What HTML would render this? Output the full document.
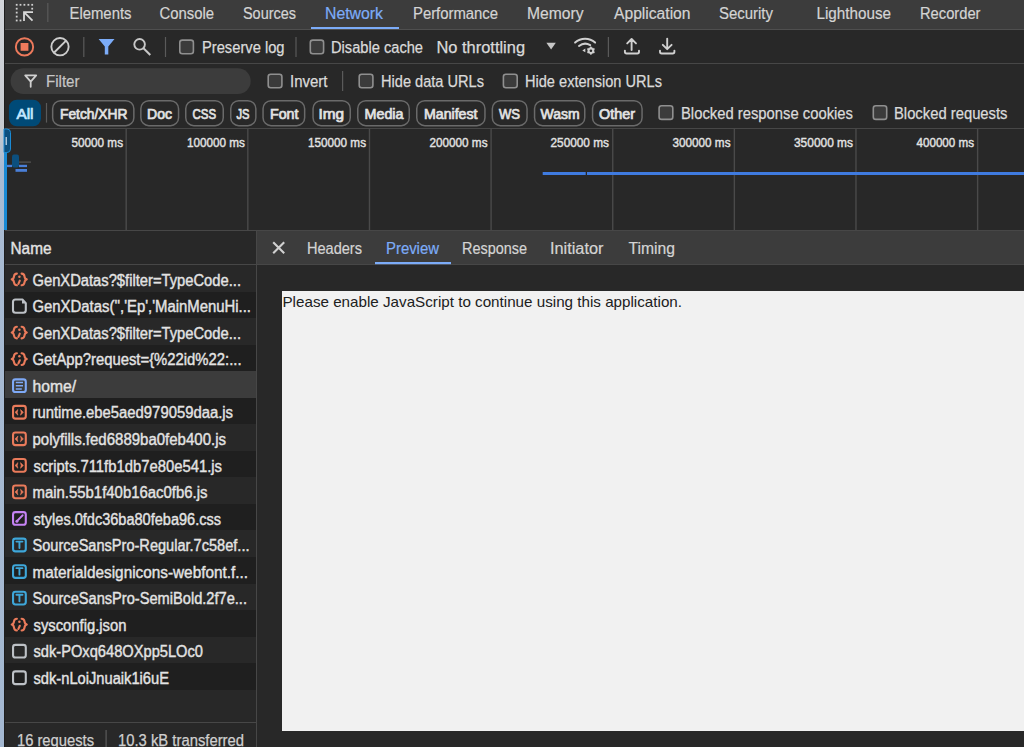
<!DOCTYPE html>
<html><head><meta charset='utf-8'><style>
html,body{margin:0;padding:0;width:1024px;height:747px;overflow:hidden;background:#282828;}
div{position:absolute;}
svg{position:absolute;left:0;top:0;}
</style></head><body>
<div style='left:0px;top:0px;width:4px;height:747px;background:linear-gradient(#d2d5da 0px,#c6cad0 130px,#a9bbd2 165px,#a4b8d1 747px);'></div><div style='left:4px;top:0px;width:1px;height:747px;background:#1e1e1e;'></div><div style='left:5px;top:0px;width:1019px;height:29px;background:#3c3c3c;'></div><div style='left:5px;top:29px;width:1019px;height:1px;background:#4f4f4f;'></div><div style='left:5px;top:30px;width:1019px;height:200px;background:#282828;'></div><div style='left:5px;top:63px;width:1019px;height:1px;background:#474747;'></div><div style='left:5px;top:128px;width:1019px;height:1px;background:#474747;'></div><div style='left:5px;top:230px;width:1019px;height:1px;background:#474747;'></div><div style='left:5px;top:231px;width:251px;height:516px;background:#282828;'></div><div style='left:257px;top:231px;width:767px;height:33px;background:#3c3c3c;'></div><div style='left:5px;top:264px;width:1019px;height:1px;background:#474747;'></div><div style='left:256px;top:231px;width:1px;height:516px;background:#474747;'></div><div style='left:257px;top:265px;width:767px;height:482px;background:#282828;'></div><div style='left:5px;top:265.0px;width:251px;height:26.55000000000001px;background:#282828;'></div><div style='left:5px;top:291.55px;width:251px;height:26.55000000000001px;background:#1f1f1f;'></div><div style='left:5px;top:318.1px;width:251px;height:26.549999999999955px;background:#282828;'></div><div style='left:5px;top:344.65px;width:251px;height:26.55000000000001px;background:#1f1f1f;'></div><div style='left:5px;top:371.2px;width:251px;height:26.55000000000001px;background:#3c3c3c;'></div><div style='left:5px;top:397.75px;width:251px;height:26.55000000000001px;background:#1f1f1f;'></div><div style='left:5px;top:424.3px;width:251px;height:26.55000000000001px;background:#282828;'></div><div style='left:5px;top:450.85px;width:251px;height:26.549999999999955px;background:#1f1f1f;'></div><div style='left:5px;top:477.4px;width:251px;height:26.55000000000001px;background:#282828;'></div><div style='left:5px;top:503.95px;width:251px;height:26.55000000000001px;background:#1f1f1f;'></div><div style='left:5px;top:530.5px;width:251px;height:26.549999999999955px;background:#282828;'></div><div style='left:5px;top:557.05px;width:251px;height:26.550000000000068px;background:#1f1f1f;'></div><div style='left:5px;top:583.6px;width:251px;height:26.549999999999955px;background:#282828;'></div><div style='left:5px;top:610.15px;width:251px;height:26.550000000000068px;background:#1f1f1f;'></div><div style='left:5px;top:636.7px;width:251px;height:26.549999999999955px;background:#282828;'></div><div style='left:5px;top:663.25px;width:251px;height:26.549999999999955px;background:#1f1f1f;'></div><div style='left:5px;top:722px;width:251px;height:1px;background:#474747;'></div><div style='left:282px;top:291px;width:742px;height:440px;background:#f1f1f1;'></div>
<svg width='1024' height='747' viewBox='0 0 1024 747'>
<rect x='311' y='27' width='88' height='2' fill='#7cacf8'/>
<rect x='47.2' y='3' width='1.2' height='19' fill='#5a5a5a'/>
<rect x='15.799999999999999' y='3.9' width='1.8' height='1.8' fill='#d0d0d0'/>
<rect x='19.6' y='3.9' width='1.8' height='1.8' fill='#d0d0d0'/>
<rect x='23.5' y='3.9' width='1.8' height='1.8' fill='#d0d0d0'/>
<rect x='27.5' y='3.9' width='1.8' height='1.8' fill='#d0d0d0'/>
<rect x='31.300000000000004' y='3.9' width='1.8' height='1.8' fill='#d0d0d0'/>
<rect x='15.799999999999999' y='7.799999999999999' width='1.8' height='1.8' fill='#d0d0d0'/>
<rect x='15.799999999999999' y='11.7' width='1.8' height='1.8' fill='#d0d0d0'/>
<rect x='15.799999999999999' y='15.700000000000001' width='1.8' height='1.8' fill='#d0d0d0'/>
<rect x='15.799999999999999' y='19.6' width='1.8' height='1.8' fill='#d0d0d0'/>
<rect x='19.6' y='19.6' width='1.8' height='1.8' fill='#d0d0d0'/>
<rect x='31.300000000000004' y='7.799999999999999' width='1.8' height='1.8' fill='#d0d0d0'/>
<path d='M24 21V12.2H33M24.5 12.7L32.5 20.7' stroke='#d8d8d8' stroke-width='1.8' fill='none'/>
<circle cx='24.5' cy='46.9' r='8.65' stroke='#ee7a5c' stroke-width='1.9' fill='none'/>
<rect x='20.6' y='43' width='7.8' height='7.8' fill='#ee7a5c'/>
<circle cx='60' cy='46.7' r='8.65' stroke='#cdcdcd' stroke-width='1.9' fill='none'/>
<path d='M54.2 52.5L65.8 40.9' stroke='#cdcdcd' stroke-width='1.9'/>
<rect x='83.2' y='37' width='1.2' height='20' fill='#5a5a5a'/>
<rect x='164.9' y='37' width='1.2' height='20' fill='#5a5a5a'/>
<rect x='295.4' y='37' width='1.2' height='20' fill='#5a5a5a'/>
<rect x='607.8' y='37' width='1.2' height='20' fill='#5a5a5a'/>
<path d='M98.6 39H114.5L108.3 46.5V54.5H104.8V46.5Z' fill='#7cacf8'/>
<circle cx='139.6' cy='44.3' r='5.3' stroke='#c7c7c7' stroke-width='1.9' fill='none'/>
<path d='M143.5 48.3L150.3 55' stroke='#c7c7c7' stroke-width='2'/>
<rect x='179.8' y='40.099999999999994' width='13.599999999999989' height='13.700000000000005' rx='2.5' fill='#3b3b3b' stroke='#8f8f8f' stroke-width='1.6'/>
<rect x='310.3' y='40.099999999999994' width='13.299999999999978' height='13.700000000000005' rx='2.5' fill='#3b3b3b' stroke='#8f8f8f' stroke-width='1.6'/>
<path d='M546.4 42.8H555.8L551.1 49.5Z' fill='#c7c7c7'/>
<path d='M575.1 42.6A15.06 15.06 0 0 1 595.1 42.6M579 46A10.06 10.06 0 0 1 590.2 45.1' stroke='#d0d0d0' stroke-width='2' fill='none' stroke-linecap='round'/>
<path d='M585.3 48.6L582.3 50.4L585.3 52.2Z' fill='#d0d0d0'/>
<polygon points='590.90,46.60 592.40,48.10 594.45,48.65 593.90,50.70 594.45,52.75 592.40,53.30 590.90,54.80 589.40,53.30 587.35,52.75 587.90,50.70 587.35,48.65 589.40,48.10' fill='#d0d0d0' stroke='#d0d0d0' stroke-width='0.5' stroke-linejoin='round'/>
<circle cx='590.9' cy='50.7' r='1.3' fill='#282828'/>
<path d='M631.6 50V39.3M627.2 43.4L631.6 39L636 43.4M624.9 50.6V51.8Q624.9 53.5 626.6 53.5H637.3Q639 53.5 639 51.8V50.6' stroke='#d0d0d0' stroke-width='1.9' fill='none' stroke-linecap='round' stroke-linejoin='round'/>
<path d='M667.2 38.6V48.6M662.8 44.8L667.2 49.2L671.6 44.8M660 50.6V51.8Q660 53.5 661.7 53.5H672.7Q674.4 53.5 674.4 51.8V50.6' stroke='#d0d0d0' stroke-width='1.9' fill='none' stroke-linecap='round' stroke-linejoin='round'/>
<rect x='10.6' y='68.3' width='240.1' height='25.6' rx='12.8' fill='#3c3c3c'/>
<path d='M25.2 75.4H36.2L30.7 81.6ZM30.7 81.4V86.8' stroke='#d0d0d0' stroke-width='1.8' fill='none' stroke-linejoin='round' stroke-linecap='round'/>
<rect x='268.2' y='74.2' width='13.700000000000012' height='13.499999999999995' rx='2.5' fill='#3b3b3b' stroke='#8f8f8f' stroke-width='1.6'/>
<rect x='342' y='71' width='1.2' height='20' fill='#5a5a5a'/>
<rect x='359.2' y='74.2' width='13.700000000000012' height='13.499999999999995' rx='2.5' fill='#3b3b3b' stroke='#8f8f8f' stroke-width='1.6'/>
<rect x='503.40000000000003' y='74.2' width='13.799999999999978' height='13.499999999999995' rx='2.5' fill='#3b3b3b' stroke='#8f8f8f' stroke-width='1.6'/>
<rect x='8.9' y='99.7' width='32.1' height='26.6' rx='8' fill='#004a77'/>
<rect x='45.9' y='103' width='1.2' height='19.6' fill='#5a5a5a'/>
<rect x='52.65' y='100.75' width='81.19999999999999' height='24.9' rx='8' fill='none' stroke='#6a6a6a' stroke-width='1.5'/>
<rect x='140.85' y='100.75' width='37.70000000000002' height='24.9' rx='8' fill='none' stroke='#6a6a6a' stroke-width='1.5'/>
<rect x='185.75' y='100.75' width='37.5' height='24.9' rx='8' fill='none' stroke='#6a6a6a' stroke-width='1.5'/>
<rect x='230.75' y='100.75' width='25.100000000000023' height='24.9' rx='8' fill='none' stroke='#6a6a6a' stroke-width='1.5'/>
<rect x='263.05' y='100.75' width='41.599999999999966' height='24.9' rx='8' fill='none' stroke='#6a6a6a' stroke-width='1.5'/>
<rect x='313.05' y='100.75' width='37.19999999999999' height='24.9' rx='8' fill='none' stroke='#6a6a6a' stroke-width='1.5'/>
<rect x='357.75' y='100.75' width='51.5' height='24.9' rx='8' fill='none' stroke='#6a6a6a' stroke-width='1.5'/>
<rect x='416.75' y='100.75' width='68.19999999999999' height='24.9' rx='8' fill='none' stroke='#6a6a6a' stroke-width='1.5'/>
<rect x='492.35' y='100.75' width='34.69999999999993' height='24.9' rx='8' fill='none' stroke='#6a6a6a' stroke-width='1.5'/>
<rect x='534.55' y='100.75' width='50.200000000000045' height='24.9' rx='8' fill='none' stroke='#6a6a6a' stroke-width='1.5'/>
<rect x='592.55' y='100.75' width='49.5' height='24.9' rx='8' fill='none' stroke='#6a6a6a' stroke-width='1.5'/>
<rect x='659.0999999999999' y='105.8' width='13.700000000000069' height='13.600000000000003' rx='2.5' fill='#3b3b3b' stroke='#8f8f8f' stroke-width='1.6'/>
<rect x='873.3' y='105.8' width='13.4' height='13.600000000000003' rx='2.5' fill='#3b3b3b' stroke='#8f8f8f' stroke-width='1.6'/>
<rect x='125.50' y='129' width='1.4' height='101' fill='#4a4a4a'/>
<rect x='247.13' y='129' width='1.4' height='101' fill='#4a4a4a'/>
<rect x='368.76' y='129' width='1.4' height='101' fill='#4a4a4a'/>
<rect x='490.39' y='129' width='1.4' height='101' fill='#4a4a4a'/>
<rect x='612.02' y='129' width='1.4' height='101' fill='#4a4a4a'/>
<rect x='733.65' y='129' width='1.4' height='101' fill='#4a4a4a'/>
<rect x='855.28' y='129' width='1.4' height='101' fill='#4a4a4a'/>
<rect x='976.91' y='129' width='1.4' height='101' fill='#4a4a4a'/>
<rect x='542.7' y='172' width='43' height='3' fill='#3f7be0'/>
<rect x='587' y='172' width='437' height='3' fill='#3f7be0'/>
<rect x='4' y='129' width='3' height='101' fill='#1a8ad4'/>
<path d='M4 129H7A3.5 3.5 0 0 1 10.5 132.5V149A3.5 3.5 0 0 1 7 152.5H4Z' fill='#0c4f7e' stroke='#1a8ad4' stroke-width='1'/>
<rect x='5.6' y='137' width='1.2' height='8' fill='#cfe3f5'/>
<rect x='12' y='154.5' width='7' height='13' rx='2' fill='#0c4f7e'/>
<rect x='19' y='161.5' width='12' height='1.2' fill='#555'/>
<rect x='7' y='164.8' width='5' height='2.3' fill='#4a7fd8'/>
<rect x='19' y='164.8' width='8' height='2.3' fill='#4a7fd8'/>
<rect x='15.5' y='169' width='11.5' height='2.8' fill='#4a7fd8'/>
<path d='M273.2 242.2L284.2 253.2M284.2 242.2L273.2 253.2' stroke='#d0d0d0' stroke-width='2.1'/>
<rect x='375' y='262' width='76' height='2.2' fill='#7cacf8'/>
<g transform='translate(0,265.00)' stroke='#ea7b5b' stroke-width='2.1' fill='none' stroke-linecap='round' stroke-linejoin='round'><path d='M16.9 8.6C14.9 8.7 14.2 9.6 14 11.3C13.8 13.2 13.3 14 11.7 14.35C13.3 14.7 13.8 15.5 14 17.4C14.2 19.1 14.9 20.1 16.9 20.3'/><path d='M21.6 8.6C23.6 8.7 24.3 9.6 24.5 11.3C24.7 13.2 25.2 14 26.8 14.35C25.2 14.7 24.7 15.5 24.5 17.4C24.3 19.1 23.6 20.1 21.6 20.3'/></g>
<circle cx='19.4' cy='276.70' r='1.25' fill='#ea7b5b'/>
<path d='M19.8 280.60L18.4 283.80' stroke='#ea7b5b' stroke-width='2.1' stroke-linecap='round'/>
<path d='M15.5 299.55H22.4L25.8 303.15V310.25Q25.8 312.75 23.3 312.75H15.5Q13 312.75 13 310.25V302.05Q13 299.55 15.5 299.55Z' stroke='#bdc1c6' stroke-width='2.1' fill='none' stroke-linejoin='round'/>
<path d='M22 299.85L25.6 303.55H22Z' fill='#bdc1c6'/>
<g transform='translate(0,318.10)' stroke='#ea7b5b' stroke-width='2.1' fill='none' stroke-linecap='round' stroke-linejoin='round'><path d='M16.9 8.6C14.9 8.7 14.2 9.6 14 11.3C13.8 13.2 13.3 14 11.7 14.35C13.3 14.7 13.8 15.5 14 17.4C14.2 19.1 14.9 20.1 16.9 20.3'/><path d='M21.6 8.6C23.6 8.7 24.3 9.6 24.5 11.3C24.7 13.2 25.2 14 26.8 14.35C25.2 14.7 24.7 15.5 24.5 17.4C24.3 19.1 23.6 20.1 21.6 20.3'/></g>
<circle cx='19.4' cy='329.80' r='1.25' fill='#ea7b5b'/>
<path d='M19.8 333.70L18.4 336.90' stroke='#ea7b5b' stroke-width='2.1' stroke-linecap='round'/>
<g transform='translate(0,344.65)' stroke='#ea7b5b' stroke-width='2.1' fill='none' stroke-linecap='round' stroke-linejoin='round'><path d='M16.9 8.6C14.9 8.7 14.2 9.6 14 11.3C13.8 13.2 13.3 14 11.7 14.35C13.3 14.7 13.8 15.5 14 17.4C14.2 19.1 14.9 20.1 16.9 20.3'/><path d='M21.6 8.6C23.6 8.7 24.3 9.6 24.5 11.3C24.7 13.2 25.2 14 26.8 14.35C25.2 14.7 24.7 15.5 24.5 17.4C24.3 19.1 23.6 20.1 21.6 20.3'/></g>
<circle cx='19.4' cy='356.35' r='1.25' fill='#ea7b5b'/>
<path d='M19.8 360.25L18.4 363.45' stroke='#ea7b5b' stroke-width='2.1' stroke-linecap='round'/>
<rect x='13.05' y='379.35' width='12.75' height='12.7' rx='2.4' stroke='#7ea9f6' stroke-width='2.1' fill='none'/>
<path d='M15.8 382.50H23M15.8 385.75H23M15.8 389.00H21.8' stroke='#7ea9f6' stroke-width='1.5'/>
<rect x='13.05' y='405.90' width='12.75' height='12.7' rx='2.4' stroke='#ea7b5b' stroke-width='2.1' fill='none'/>
<path d='M17.9 409.55L15 412.35L17.9 415.15L17.2 412.35ZM20.5 409.55L23.4 412.35L20.5 415.15L21.2 412.35Z' fill='#ea7b5b' stroke='#ea7b5b' stroke-width='0.6' stroke-linejoin='round'/>
<rect x='13.05' y='432.45' width='12.75' height='12.7' rx='2.4' stroke='#ea7b5b' stroke-width='2.1' fill='none'/>
<path d='M17.9 436.10L15 438.90L17.9 441.70L17.2 438.90ZM20.5 436.10L23.4 438.90L20.5 441.70L21.2 438.90Z' fill='#ea7b5b' stroke='#ea7b5b' stroke-width='0.6' stroke-linejoin='round'/>
<rect x='13.05' y='459.00' width='12.75' height='12.7' rx='2.4' stroke='#ea7b5b' stroke-width='2.1' fill='none'/>
<path d='M17.9 462.65L15 465.45L17.9 468.25L17.2 465.45ZM20.5 462.65L23.4 465.45L20.5 468.25L21.2 465.45Z' fill='#ea7b5b' stroke='#ea7b5b' stroke-width='0.6' stroke-linejoin='round'/>
<rect x='13.05' y='485.55' width='12.75' height='12.7' rx='2.4' stroke='#ea7b5b' stroke-width='2.1' fill='none'/>
<path d='M17.9 489.20L15 492.00L17.9 494.80L17.2 492.00ZM20.5 489.20L23.4 492.00L20.5 494.80L21.2 492.00Z' fill='#ea7b5b' stroke='#ea7b5b' stroke-width='0.6' stroke-linejoin='round'/>
<rect x='13.05' y='512.10' width='12.75' height='12.7' rx='2.4' stroke='#c583f3' stroke-width='2.1' fill='none'/>
<path d='M17.3 520.75L22.7 515.25' stroke='#c583f3' stroke-width='1.8' stroke-linecap='round'/>
<circle cx='16.9' cy='521.15' r='1.5' fill='#c583f3'/>
<rect x='13.05' y='538.65' width='12.75' height='12.7' rx='2.4' stroke='#3ea7da' stroke-width='2.1' fill='none'/>
<path d='M16.4 541.60H22.5M19.45 541.60V548.10' stroke='#3ea7da' stroke-width='1.9' stroke-linecap='round'/>
<rect x='13.05' y='565.20' width='12.75' height='12.7' rx='2.4' stroke='#3ea7da' stroke-width='2.1' fill='none'/>
<path d='M16.4 568.15H22.5M19.45 568.15V574.65' stroke='#3ea7da' stroke-width='1.9' stroke-linecap='round'/>
<rect x='13.05' y='591.75' width='12.75' height='12.7' rx='2.4' stroke='#3ea7da' stroke-width='2.1' fill='none'/>
<path d='M16.4 594.70H22.5M19.45 594.70V601.20' stroke='#3ea7da' stroke-width='1.9' stroke-linecap='round'/>
<g transform='translate(0,610.15)' stroke='#ea7b5b' stroke-width='2.1' fill='none' stroke-linecap='round' stroke-linejoin='round'><path d='M16.9 8.6C14.9 8.7 14.2 9.6 14 11.3C13.8 13.2 13.3 14 11.7 14.35C13.3 14.7 13.8 15.5 14 17.4C14.2 19.1 14.9 20.1 16.9 20.3'/><path d='M21.6 8.6C23.6 8.7 24.3 9.6 24.5 11.3C24.7 13.2 25.2 14 26.8 14.35C25.2 14.7 24.7 15.5 24.5 17.4C24.3 19.1 23.6 20.1 21.6 20.3'/></g>
<circle cx='19.4' cy='621.85' r='1.25' fill='#ea7b5b'/>
<path d='M19.8 625.75L18.4 628.95' stroke='#ea7b5b' stroke-width='2.1' stroke-linecap='round'/>
<rect x='13.05' y='644.85' width='12.75' height='12.7' rx='2.4' stroke='#bdc1c6' stroke-width='2.1' fill='none'/>
<rect x='13.05' y='671.40' width='12.75' height='12.7' rx='2.4' stroke='#bdc1c6' stroke-width='2.1' fill='none'/>
<text x='69.46' y='18.75' font-family='Liberation Sans' font-size='16' font-weight='normal' textLength='62.06' lengthAdjust='spacingAndGlyphs' fill='#d4d4d4' stroke='#d4d4d4' stroke-width='0.2' xml:space='preserve'>Elements</text>
<text x='159.48' y='18.75' font-family='Liberation Sans' font-size='16' font-weight='normal' textLength='54.52' lengthAdjust='spacingAndGlyphs' fill='#d4d4d4' stroke='#d4d4d4' stroke-width='0.2' xml:space='preserve'>Console</text>
<text x='242.98' y='18.75' font-family='Liberation Sans' font-size='16' font-weight='normal' textLength='53.02' lengthAdjust='spacingAndGlyphs' fill='#d4d4d4' stroke='#d4d4d4' stroke-width='0.2' xml:space='preserve'>Sources</text>
<text x='412.98' y='18.75' font-family='Liberation Sans' font-size='16' font-weight='normal' textLength='85.03' lengthAdjust='spacingAndGlyphs' fill='#d4d4d4' stroke='#d4d4d4' stroke-width='0.2' xml:space='preserve'>Performance</text>
<text x='526.99' y='18.75' font-family='Liberation Sans' font-size='16' font-weight='normal' textLength='56.52' lengthAdjust='spacingAndGlyphs' fill='#d4d4d4' stroke='#d4d4d4' stroke-width='0.2' xml:space='preserve'>Memory</text>
<text x='614.00' y='18.75' font-family='Liberation Sans' font-size='16' font-weight='normal' textLength='76.51' lengthAdjust='spacingAndGlyphs' fill='#d4d4d4' stroke='#d4d4d4' stroke-width='0.2' xml:space='preserve'>Application</text>
<text x='718.98' y='18.75' font-family='Liberation Sans' font-size='16' font-weight='normal' textLength='54.03' lengthAdjust='spacingAndGlyphs' fill='#d4d4d4' stroke='#d4d4d4' stroke-width='0.2' xml:space='preserve'>Security</text>
<text x='816.47' y='18.75' font-family='Liberation Sans' font-size='16' font-weight='normal' textLength='74.53' lengthAdjust='spacingAndGlyphs' fill='#d4d4d4' stroke='#d4d4d4' stroke-width='0.2' xml:space='preserve'>Lighthouse</text>
<text x='919.99' y='18.75' font-family='Liberation Sans' font-size='16' font-weight='normal' textLength='60.52' lengthAdjust='spacingAndGlyphs' fill='#d4d4d4' stroke='#d4d4d4' stroke-width='0.2' xml:space='preserve'>Recorder</text>
<text x='324.98' y='18.75' font-family='Liberation Sans' font-size='16' font-weight='normal' textLength='58.02' lengthAdjust='spacingAndGlyphs' fill='#7cacf8' stroke='#7cacf8' stroke-width='0.2' xml:space='preserve'>Network</text>
<text x='201.99' y='52.75' font-family='Liberation Sans' font-size='16' font-weight='normal' textLength='82.52' lengthAdjust='spacingAndGlyphs' fill='#dadada' stroke='#dadada' stroke-width='0.25' xml:space='preserve'>Preserve log</text>
<text x='330.99' y='52.75' font-family='Liberation Sans' font-size='16' font-weight='normal' textLength='92.03' lengthAdjust='spacingAndGlyphs' fill='#dadada' stroke='#dadada' stroke-width='0.25' xml:space='preserve'>Disable cache</text>
<text x='436.46' y='52.75' font-family='Liberation Sans' font-size='16' font-weight='normal' textLength='88.56' lengthAdjust='spacingAndGlyphs' fill='#dadada' stroke='#dadada' stroke-width='0.25' xml:space='preserve'>No throttling</text>
<text x='45.95' y='87.00' font-family='Liberation Sans' font-size='16' font-weight='normal' textLength='33.58' lengthAdjust='spacingAndGlyphs' fill='#c7c7c7' stroke='#c7c7c7' stroke-width='0.2' xml:space='preserve'>Filter</text>
<text x='289.97' y='87.00' font-family='Liberation Sans' font-size='16' font-weight='normal' textLength='37.53' lengthAdjust='spacingAndGlyphs' fill='#dadada' stroke='#dadada' stroke-width='0.25' xml:space='preserve'>Invert</text>
<text x='380.99' y='87.00' font-family='Liberation Sans' font-size='16' font-weight='normal' textLength='103.02' lengthAdjust='spacingAndGlyphs' fill='#dadada' stroke='#dadada' stroke-width='0.25' xml:space='preserve'>Hide data URLs</text>
<text x='524.99' y='87.00' font-family='Liberation Sans' font-size='16' font-weight='normal' textLength='137.01' lengthAdjust='spacingAndGlyphs' fill='#dadada' stroke='#dadada' stroke-width='0.25' xml:space='preserve'>Hide extension URLs</text>
<text x='681.00' y='118.60' font-family='Liberation Sans' font-size='16' font-weight='normal' textLength='172.00' lengthAdjust='spacingAndGlyphs' fill='#dadada' stroke='#dadada' stroke-width='0.25' xml:space='preserve'>Blocked response cookies</text>
<text x='893.99' y='118.60' font-family='Liberation Sans' font-size='16' font-weight='normal' textLength='113.52' lengthAdjust='spacingAndGlyphs' fill='#dadada' stroke='#dadada' stroke-width='0.25' xml:space='preserve'>Blocked requests</text>
<text x='71.50' y='146.70' font-family='Liberation Sans' font-size='12.8' font-weight='normal' textLength='51.51' lengthAdjust='spacingAndGlyphs' fill='#e3e3e3' stroke='#e3e3e3' stroke-width='0.4' xml:space='preserve'>50000 ms</text>
<text x='186.99' y='146.70' font-family='Liberation Sans' font-size='12.8' font-weight='normal' textLength='58.01' lengthAdjust='spacingAndGlyphs' fill='#e3e3e3' stroke='#e3e3e3' stroke-width='0.4' xml:space='preserve'>100000 ms</text>
<text x='308.00' y='146.70' font-family='Liberation Sans' font-size='12.8' font-weight='normal' textLength='58.01' lengthAdjust='spacingAndGlyphs' fill='#e3e3e3' stroke='#e3e3e3' stroke-width='0.4' xml:space='preserve'>150000 ms</text>
<text x='429.50' y='146.70' font-family='Liberation Sans' font-size='12.8' font-weight='normal' textLength='58.01' lengthAdjust='spacingAndGlyphs' fill='#e3e3e3' stroke='#e3e3e3' stroke-width='0.4' xml:space='preserve'>200000 ms</text>
<text x='550.49' y='146.70' font-family='Liberation Sans' font-size='12.8' font-weight='normal' textLength='58.51' lengthAdjust='spacingAndGlyphs' fill='#e3e3e3' stroke='#e3e3e3' stroke-width='0.4' xml:space='preserve'>250000 ms</text>
<text x='672.50' y='146.70' font-family='Liberation Sans' font-size='12.8' font-weight='normal' textLength='58.00' lengthAdjust='spacingAndGlyphs' fill='#e3e3e3' stroke='#e3e3e3' stroke-width='0.4' xml:space='preserve'>300000 ms</text>
<text x='793.99' y='146.70' font-family='Liberation Sans' font-size='12.8' font-weight='normal' textLength='59.01' lengthAdjust='spacingAndGlyphs' fill='#e3e3e3' stroke='#e3e3e3' stroke-width='0.4' xml:space='preserve'>350000 ms</text>
<text x='916.49' y='146.70' font-family='Liberation Sans' font-size='12.8' font-weight='normal' textLength='57.52' lengthAdjust='spacingAndGlyphs' fill='#e3e3e3' stroke='#e3e3e3' stroke-width='0.4' xml:space='preserve'>400000 ms</text>
<text x='10.47' y='254.10' font-family='Liberation Sans' font-size='16' font-weight='normal' textLength='41.04' lengthAdjust='spacingAndGlyphs' fill='#e3e3e3' stroke='#e3e3e3' stroke-width='0.4' xml:space='preserve'>Name</text>
<text x='306.98' y='254.10' font-family='Liberation Sans' font-size='16' font-weight='normal' textLength='55.03' lengthAdjust='spacingAndGlyphs' fill='#d4d4d4' stroke='#d4d4d4' stroke-width='0.2' xml:space='preserve'>Headers</text>
<text x='461.98' y='254.10' font-family='Liberation Sans' font-size='16' font-weight='normal' textLength='65.04' lengthAdjust='spacingAndGlyphs' fill='#d4d4d4' stroke='#d4d4d4' stroke-width='0.2' xml:space='preserve'>Response</text>
<text x='549.96' y='254.10' font-family='Liberation Sans' font-size='16' font-weight='normal' textLength='53.54' lengthAdjust='spacingAndGlyphs' fill='#d4d4d4' stroke='#d4d4d4' stroke-width='0.2' xml:space='preserve'>Initiator</text>
<text x='628.48' y='254.10' font-family='Liberation Sans' font-size='16' font-weight='normal' textLength='46.54' lengthAdjust='spacingAndGlyphs' fill='#d4d4d4' stroke='#d4d4d4' stroke-width='0.2' xml:space='preserve'>Timing</text>
<text x='385.98' y='254.10' font-family='Liberation Sans' font-size='16' font-weight='normal' textLength='53.02' lengthAdjust='spacingAndGlyphs' fill='#7cacf8' stroke='#7cacf8' stroke-width='0.2' xml:space='preserve'>Preview</text>
<text x='32.49' y='285.70' font-family='Liberation Sans' font-size='16' font-weight='normal' textLength='208.52' lengthAdjust='spacingAndGlyphs' fill='#e3e3e3' stroke='#e3e3e3' stroke-width='0.4' xml:space='preserve'>GenXDatas?$filter=TypeCode...</text>
<text x='32.49' y='312.25' font-family='Liberation Sans' font-size='16' font-weight='normal' textLength='218.52' lengthAdjust='spacingAndGlyphs' fill='#e3e3e3' stroke='#e3e3e3' stroke-width='0.4' xml:space='preserve'>GenXDatas('','Ep','MainMenuHi...</text>
<text x='32.49' y='338.80' font-family='Liberation Sans' font-size='16' font-weight='normal' textLength='208.52' lengthAdjust='spacingAndGlyphs' fill='#e3e3e3' stroke='#e3e3e3' stroke-width='0.4' xml:space='preserve'>GenXDatas?$filter=TypeCode...</text>
<text x='32.49' y='365.35' font-family='Liberation Sans' font-size='16' font-weight='normal' textLength='209.02' lengthAdjust='spacingAndGlyphs' fill='#e3e3e3' stroke='#e3e3e3' stroke-width='0.4' xml:space='preserve'>GetApp?request={%22id%22:...</text>
<text x='32.48' y='391.90' font-family='Liberation Sans' font-size='16' font-weight='normal' textLength='43.52' lengthAdjust='spacingAndGlyphs' fill='#e3e3e3' stroke='#e3e3e3' stroke-width='0.4' xml:space='preserve'>home/</text>
<text x='32.49' y='418.45' font-family='Liberation Sans' font-size='16' font-weight='normal' textLength='200.51' lengthAdjust='spacingAndGlyphs' fill='#e3e3e3' stroke='#e3e3e3' stroke-width='0.4' xml:space='preserve'>runtime.ebe5aed979059daa.js</text>
<text x='32.49' y='445.00' font-family='Liberation Sans' font-size='16' font-weight='normal' textLength='193.51' lengthAdjust='spacingAndGlyphs' fill='#e3e3e3' stroke='#e3e3e3' stroke-width='0.4' xml:space='preserve'>polyfills.fed6889ba0feb400.js</text>
<text x='33.50' y='471.55' font-family='Liberation Sans' font-size='16' font-weight='normal' textLength='188.50' lengthAdjust='spacingAndGlyphs' fill='#e3e3e3' stroke='#e3e3e3' stroke-width='0.4' xml:space='preserve'>scripts.711fb1db7e80e541.js</text>
<text x='32.49' y='498.10' font-family='Liberation Sans' font-size='16' font-weight='normal' textLength='175.01' lengthAdjust='spacingAndGlyphs' fill='#e3e3e3' stroke='#e3e3e3' stroke-width='0.4' xml:space='preserve'>main.55b1f40b16ac0fb6.js</text>
<text x='33.50' y='524.65' font-family='Liberation Sans' font-size='16' font-weight='normal' textLength='187.51' lengthAdjust='spacingAndGlyphs' fill='#e3e3e3' stroke='#e3e3e3' stroke-width='0.4' xml:space='preserve'>styles.0fdc36ba80feba96.css</text>
<text x='32.49' y='551.20' font-family='Liberation Sans' font-size='16' font-weight='normal' textLength='217.02' lengthAdjust='spacingAndGlyphs' fill='#e3e3e3' stroke='#e3e3e3' stroke-width='0.4' xml:space='preserve'>SourceSansPro-Regular.7c58ef...</text>
<text x='32.49' y='577.75' font-family='Liberation Sans' font-size='16' font-weight='normal' textLength='215.52' lengthAdjust='spacingAndGlyphs' fill='#e3e3e3' stroke='#e3e3e3' stroke-width='0.4' xml:space='preserve'>materialdesignicons-webfont.f...</text>
<text x='32.49' y='604.30' font-family='Liberation Sans' font-size='16' font-weight='normal' textLength='214.52' lengthAdjust='spacingAndGlyphs' fill='#e3e3e3' stroke='#e3e3e3' stroke-width='0.4' xml:space='preserve'>SourceSansPro-SemiBold.2f7e...</text>
<text x='33.49' y='630.85' font-family='Liberation Sans' font-size='16' font-weight='normal' textLength='93.02' lengthAdjust='spacingAndGlyphs' fill='#e3e3e3' stroke='#e3e3e3' stroke-width='0.4' xml:space='preserve'>sysconfig.json</text>
<text x='33.49' y='657.40' font-family='Liberation Sans' font-size='16' font-weight='normal' textLength='169.51' lengthAdjust='spacingAndGlyphs' fill='#e3e3e3' stroke='#e3e3e3' stroke-width='0.4' xml:space='preserve'>sdk-POxq648OXpp5LOc0</text>
<text x='33.49' y='683.95' font-family='Liberation Sans' font-size='16' font-weight='normal' textLength='135.51' lengthAdjust='spacingAndGlyphs' fill='#e3e3e3' stroke='#e3e3e3' stroke-width='0.4' xml:space='preserve'>sdk-nLoiJnuaik1i6uE</text>
<text x='16.98' y='745.60' font-family='Liberation Sans' font-size='16' font-weight='normal' textLength='77.04' lengthAdjust='spacingAndGlyphs' fill='#cfcfcf' stroke='#cfcfcf' stroke-width='0.25' xml:space='preserve'>16 requests</text>
<text x='117.99' y='745.60' font-family='Liberation Sans' font-size='16' font-weight='normal' textLength='126.02' lengthAdjust='spacingAndGlyphs' fill='#cfcfcf' stroke='#cfcfcf' stroke-width='0.25' xml:space='preserve'>10.3 kB transferred</text>
<text x='282.49' y='306.80' font-family='Liberation Sans' font-size='15' font-weight='normal' textLength='399.52' lengthAdjust='spacingAndGlyphs' fill='#202020' stroke='#202020' stroke-width='0' xml:space='preserve'>Please enable JavaScript to continue using this application.</text>
<text x='59.98' y='118.50' font-family='Liberation Sans' font-size='14.3' font-weight='normal' textLength='67.53' lengthAdjust='spacingAndGlyphs' fill='#e3e3e3' stroke='#e3e3e3' stroke-width='0.7' xml:space='preserve'>Fetch/XHR</text>
<text x='147.00' y='118.50' font-family='Liberation Sans' font-size='14.3' font-weight='normal' textLength='25.02' lengthAdjust='spacingAndGlyphs' fill='#e3e3e3' stroke='#e3e3e3' stroke-width='0.7' xml:space='preserve'>Doc</text>
<text x='192.50' y='118.50' font-family='Liberation Sans' font-size='14.3' font-weight='normal' textLength='23.52' lengthAdjust='spacingAndGlyphs' fill='#e3e3e3' stroke='#e3e3e3' stroke-width='0.7' xml:space='preserve'>CSS</text>
<text x='236.50' y='118.50' font-family='Liberation Sans' font-size='14.3' font-weight='normal' textLength='13.00' lengthAdjust='spacingAndGlyphs' fill='#e3e3e3' stroke='#e3e3e3' stroke-width='0.7' xml:space='preserve'>JS</text>
<text x='269.99' y='118.50' font-family='Liberation Sans' font-size='14.3' font-weight='normal' textLength='28.51' lengthAdjust='spacingAndGlyphs' fill='#e3e3e3' stroke='#e3e3e3' stroke-width='0.7' xml:space='preserve'>Font</text>
<text x='318.43' y='118.50' font-family='Liberation Sans' font-size='14.3' font-weight='normal' textLength='25.61' lengthAdjust='spacingAndGlyphs' fill='#e3e3e3' stroke='#e3e3e3' stroke-width='0.7' xml:space='preserve'>Img</text>
<text x='364.50' y='118.50' font-family='Liberation Sans' font-size='14.3' font-weight='normal' textLength='39.00' lengthAdjust='spacingAndGlyphs' fill='#e3e3e3' stroke='#e3e3e3' stroke-width='0.7' xml:space='preserve'>Media</text>
<text x='424.00' y='118.50' font-family='Liberation Sans' font-size='14.3' font-weight='normal' textLength='53.51' lengthAdjust='spacingAndGlyphs' fill='#e3e3e3' stroke='#e3e3e3' stroke-width='0.7' xml:space='preserve'>Manifest</text>
<text x='498.99' y='118.50' font-family='Liberation Sans' font-size='14.3' font-weight='normal' textLength='21.02' lengthAdjust='spacingAndGlyphs' fill='#e3e3e3' stroke='#e3e3e3' stroke-width='0.7' xml:space='preserve'>WS</text>
<text x='540.50' y='118.50' font-family='Liberation Sans' font-size='14.3' font-weight='normal' textLength='39.01' lengthAdjust='spacingAndGlyphs' fill='#e3e3e3' stroke='#e3e3e3' stroke-width='0.7' xml:space='preserve'>Wasm</text>
<text x='599.00' y='118.50' font-family='Liberation Sans' font-size='14.3' font-weight='normal' textLength='36.00' lengthAdjust='spacingAndGlyphs' fill='#e3e3e3' stroke='#e3e3e3' stroke-width='0.7' xml:space='preserve'>Other</text>
<text x='16.46' y='118.60' font-family='Liberation Sans' font-size='14.3' font-weight='normal' textLength='17.08' lengthAdjust='spacingAndGlyphs' fill='#c2e7ff' stroke='#c2e7ff' stroke-width='0.7' xml:space='preserve'>All</text>
<rect x='105.5' y='730' width='1.2' height='17' fill='#5a5a5a'/>
</svg>
</body></html>
